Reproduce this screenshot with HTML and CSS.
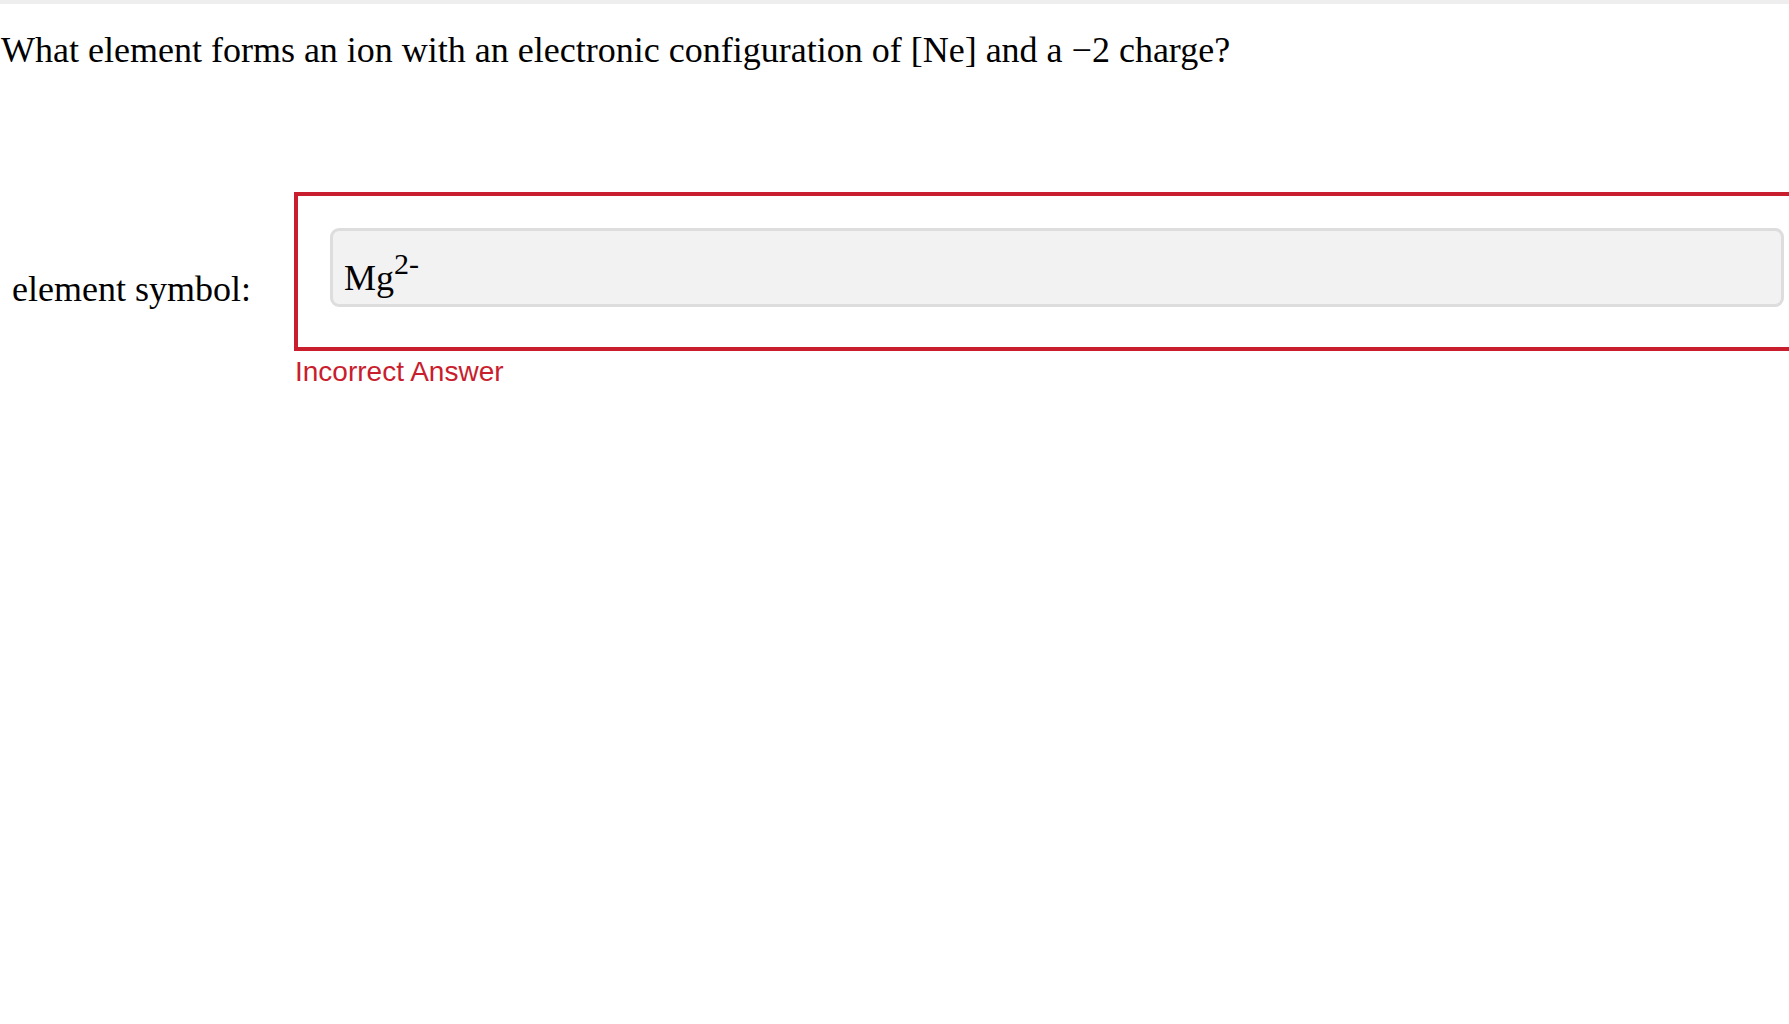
FILE: index.html
```html
<!DOCTYPE html>
<html lang="en">
<head>
    <meta charset="UTF-8">
    <meta name="viewport" content="width=device-width, initial-scale=1.0">
    <title>Element Symbol Question</title>
    <link rel="stylesheet" href="styles.css">
</head>
<body>
    <div class="top-rule"></div>

    <p class="question">What element forms an ion with an electronic configuration of [Ne] and a &minus;2 charge?</p>

    <div class="answer-row">
        <label class="answer-label">element symbol:</label>
        <div class="answer-field">
            <div class="answer-box incorrect">
                <div class="answer-input">Mg<sup>2-</sup></div>
            </div>
            <div class="feedback">Incorrect Answer</div>
        </div>
    </div>
</body>
</html>
```

FILE: styles.css
```css
html, body {
    overflow: hidden;
}
body {
    margin: 0;
    background: #fff;
    color: #000;
    font-family: "Liberation Serif", "Times New Roman", serif;
    font-size: 36px;
}
.top-rule {
    height: 4px;
    background: #eeeeee;
}
.question {
    margin: 0;
    padding: 26px 0 0 1px;
    line-height: 41px;
}
.answer-row {
    display: flex;
    align-items: flex-start;
    margin-top: 121px;
}
.answer-label {
    flex: 0 0 294px;
    box-sizing: border-box;
    padding: 77px 0 0 12px;
    line-height: 41px;
}
.answer-field {
    flex: 0 0 auto;
}
.answer-box {
    box-sizing: border-box;
    width: 1530px;
    height: 159px;
    padding: 32px 32px 0 32px;
    border: 4px solid #c81e2d;
}
.answer-input {
    box-sizing: border-box;
    width: 1454px;
    height: 79px;
    padding: 27px 11px 0 11px;
    background: #f2f2f2;
    border: 3px solid #dddddd;
    border-radius: 9px;
    line-height: 41px;
}
.answer-input sup {
    font-size: 30px;
    line-height: 0;
    vertical-align: 16px;
}
.feedback {
    margin-top: 5px;
    padding-left: 1px;
    color: #c81e2d;
    font-family: "Liberation Sans", Arial, sans-serif;
    font-size: 28px;
    line-height: 31px;
}
```
